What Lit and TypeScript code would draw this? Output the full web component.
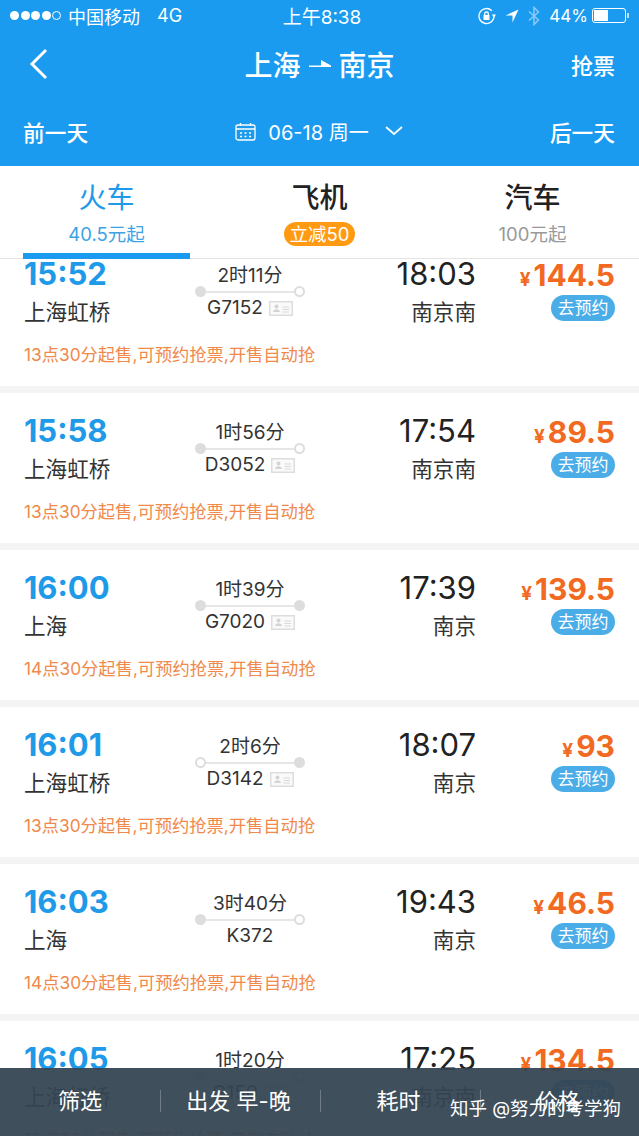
import { LitElement, html, css, svg } from "lit";
import { customElement } from "lit/decorators.js";

interface Train {
  dep: string;
  from: string;
  dur: string;
  no: string;
  arr: string;
  to: string;
  price: string;
  promo: string;
  id: boolean;
  startFull: boolean;
  endFull: boolean;
}

const sale13 = "13点30分起售,可预约抢票,开售自动抢";
const sale14 = "14点30分起售,可预约抢票,开售自动抢";

const trains: Train[] = [
  { dep: "15:52", from: "上海虹桥", dur: "2时11分", no: "G7152", arr: "18:03", to: "南京南", price: "144.5", promo: sale13, id: true, startFull: true, endFull: false },
  { dep: "15:58", from: "上海虹桥", dur: "1时56分", no: "D3052", arr: "17:54", to: "南京南", price: "89.5", promo: sale13, id: true, startFull: true, endFull: false },
  { dep: "16:00", from: "上海", dur: "1时39分", no: "G7020", arr: "17:39", to: "南京", price: "139.5", promo: sale14, id: true, startFull: true, endFull: true },
  { dep: "16:01", from: "上海虹桥", dur: "2时6分", no: "D3142", arr: "18:07", to: "南京", price: "93", promo: sale13, id: true, startFull: false, endFull: true },
  { dep: "16:03", from: "上海", dur: "3时40分", no: "K372", arr: "19:43", to: "南京", price: "46.5", promo: sale14, id: false, startFull: true, endFull: false },
  { dep: "16:05", from: "上海虹桥", dur: "1时20分", no: "G150", arr: "17:25", to: "南京南", price: "134.5", promo: sale13, id: true, startFull: true, endFull: false },
];

const idIcon = svg`<svg class="id" width="24" height="15" viewBox="0 0 24 15">
  <rect x=".75" y=".75" width="22.5" height="13.5" fill="#fafafa" stroke="#ddd" stroke-width="1.5"/>
  <circle cx="7.5" cy="5.5" r="2" fill="#d4d4d4"/>
  <path d="M4 11c.4-2 1.800-2.800 3.500-2.800s3.100.8 3.500 2.800z" fill="#d4d4d4"/>
  <path d="M13.500 6h6.500M13.500 8.500h6.500M13.500 11h6.500" stroke="#d8d8d8" stroke-width="1.200"/>
</svg>`;

@customElement("app-root")
export class AppRoot extends LitElement {
  static styles = css`
    :host {
      display: block;
      position: relative;
      width: 639px;
      height: 1136px;
      overflow: hidden;
      background: #f4f4f4;
      font-family: Inter, "Noto Sans CJK SC", sans-serif;
      color: #333;
    }
    .head {
      background: #1a9bef;
      color: #fff;
      height: 166px;
    }
    .status {
      height: 33px;
      box-sizing: border-box;
      padding: 0 10px 2px;
      display: flex;
      align-items: center;
      justify-content: space-between;
      font-size: 17px;
    }
    .status-side {
      display: flex;
      align-items: center;
      width: 220px;
    }
    .status-side.right {
      justify-content: flex-end;
      gap: 9px;
    }
    .clock {
      font-size: 19px;
      margin-left: 5px;
    }
    .dots {
      display: flex;
      gap: 1.5px;
      margin-right: 7px;
    }
    .dot {
      width: 9px;
      height: 9px;
      border-radius: 50%;
      background: #fff;
      box-sizing: border-box;
    }
    .dot.off {
      background: none;
      border: 1px solid #fff;
    }
    .carrier {
      font-size: 18px;
    }
    .net {
      margin-left: 17px;
    }
    .battery {
      display: flex;
      align-items: center;
      margin-left: -5px;
    }
    .battery-body {
      width: 34px;
      height: 15px;
      border: 1px solid #fff;
      border-radius: 3px;
      box-sizing: border-box;
      padding: 1px;
    }
    .battery-fill {
      width: 14px;
      height: 100%;
      background: #fff;
    }
    .battery-tip {
      width: 2px;
      height: 5px;
      background: #fff;
      opacity: 0.7;
      margin-left: 1px;
    }
    .nav {
      height: 61px;
      display: grid;
      grid-template-columns: 1fr auto 1fr;
      align-items: center;
      padding: 0 24px;
    }
    .back {
      margin-left: 4px;
    }
    .title {
      display: flex;
      align-items: center;
      gap: 8px;
      font-size: 28px;
      font-weight: 500;
    }
    .grab {
      justify-self: end;
      font-size: 22px;
      font-weight: 500;
    }
    .date-row {
      height: 72px;
      box-sizing: border-box;
      padding: 2px 24px 0 23px;
      display: grid;
      grid-template-columns: 1fr auto 1fr;
      align-items: center;
      font-size: 21.7px;
      font-weight: 500;
    }
    .date {
      display: flex;
      align-items: center;
      font-size: 20px;
      font-weight: 400;
    }
    .date span {
      margin: 0 16px 0 12px;
    }
    .next {
      justify-self: end;
    }

    .tabs {
      height: 93px;
      box-sizing: border-box;
      background: #fff;
      border-bottom: 1px solid #e4e4e4;
      display: grid;
      grid-template-columns: 167px 1fr 167px;
      padding: 0 23px;
      column-gap: 45px;
    }
    .tab {
      display: flex;
      flex-direction: column;
      align-items: center;
      padding-top: 14px;
      box-sizing: border-box;
      height: 93px;
    }
    .tab.on {
      border-bottom: 6px solid #1a9bef;
    }
    .tab-name {
      font-size: 28px;
      line-height: 36px;
      font-weight: 500;
      color: #222;
    }
    .tab.on .tab-name {
      color: #1f9ae8;
      font-weight: 400;
    }
    .tab-sub {
      margin-top: 6px;
      font-size: 18.5px;
      line-height: 24px;
      color: #999;
    }
    .tab.on .tab-sub {
      color: #3ea3e3;
    }
    .tab-sub.off {
      background: #ff9a12;
      color: #fff;
      border-radius: 12px;
      padding: 0 6px;
    }

    .list {
      height: 876px;
      overflow: hidden;
    }
    .cards {
      margin-top: -23px;
      display: flex;
      flex-direction: column;
      gap: 7px;
    }
    .card {
      height: 150px;
      box-sizing: border-box;
      background: #fff;
      padding: 17px 24px 0;
    }
    .row {
      display: flex;
      height: 90px;
    }
    .left {
      width: 171px;
    }
    .mid {
      width: 110px;
      display: flex;
      flex-direction: column;
      align-items: center;
      padding-top: 13px;
      font-size: 19px;
      color: #333;
    }
    .dur {
      line-height: 20px;
    }
    .arrive {
      width: 171px;
      text-align: right;
    }
    .price-col {
      flex: 1;
      display: flex;
      flex-direction: column;
      align-items: flex-end;
    }
    .time {
      font-size: 31px;
      line-height: 42px;
      color: #222;
    }
    .time.dep {
      color: #1f9ae8;
      font-weight: 700;
    }
    .place {
      margin-top: 2px;
      font-size: 21.6px;
      line-height: 30px;
      color: #333;
    }
    .line {
      width: 110px;
      height: 11px;
      display: flex;
      align-items: center;
    }
    .bar {
      flex: 1;
      height: 2px;
      background: #e6e6e6;
    }
    .end {
      width: 11px;
      height: 11px;
      box-sizing: border-box;
      border-radius: 50%;
      border: 2px solid #ddd;
      background: #fff;
    }
    .end.full {
      background: #ddd;
    }
    .no {
      margin-top: -1px;
      display: flex;
      align-items: center;
      gap: 6px;
      line-height: 24px;
    }
    .id {
      display: block;
    }
    .price {
      font-size: 30px;
      line-height: 44px;
      font-weight: 700;
      color: #f26a21;
    }
    .yen {
      font-size: 19px;
      line-height: 1;
      margin-right: 3px;
    }
    .book {
      margin-top: -2px;
      width: 64px;
      height: 26px;
      border-radius: 13px;
      background: #4aade8;
      color: #fff;
      font-size: 17px;
      line-height: 26px;
      text-align: center;
    }
    .promo {
      font-size: 17.3px;
      line-height: 24px;
      color: #ef8a4c;
    }

    .bottom {
      position: absolute;
      left: 0;
      right: 0;
      bottom: 0;
      height: 68px;
      background: rgba(52, 68, 82, 0.94);
      color: #fff;
      display: grid;
      grid-template-columns: 160px 160px 160px 159px;
      align-items: center;
      font-size: 22px;
    }
    .bottom div {
      height: 22px;
      line-height: 22px;
      text-align: center;
      border-left: 1px solid rgba(255, 255, 255, 0.25);
      margin-top: -3px;
    }
    .bottom div:first-child {
      border-left: none;
    }
    .bottom .shift {
      padding-right: 4px;
    }
    .mark {
      position: absolute;
      right: 18px;
      bottom: 16px;
      color: #fff;
      font-size: 18.5px;
      line-height: 24px;
    }
  `;

  card(t: Train) {
    return html`<div class="card">
      <div class="row">
        <div class="left">
          <div class="time dep">${t.dep}</div>
          <div class="place">${t.from}</div>
        </div>
        <div class="mid">
          <div class="dur">${t.dur}</div>
          <div class="line">
            <div class="end ${t.startFull ? "full" : ""}"></div>
            <div class="bar"></div>
            <div class="end ${t.endFull ? "full" : ""}"></div>
          </div>
          <div class="no">${t.no}${t.id ? idIcon : ""}</div>
        </div>
        <div class="arrive">
          <div class="time">${t.arr}</div>
          <div class="place">${t.to}</div>
        </div>
        <div class="price-col">
          <div class="price"><span class="yen">¥</span>${t.price}</div>
          <div class="book">去预约</div>
        </div>
      </div>
      <div class="promo">${t.promo}</div>
    </div>`;
  }

  render() {
    return html`
      <div class="head">
        <div class="status">
          <div class="status-side carrier">
            <div class="dots">
              <i class="dot"></i><i class="dot"></i><i class="dot"></i><i class="dot"></i><i class="dot off"></i>
            </div>
            中国移动<span class="net">4G</span>
          </div>
          <div class="clock">上午8:38</div>
          <div class="status-side right">
            <svg width="18" height="18" viewBox="0 0 18 18" fill="none" stroke="#fff" stroke-width="1.300">
              <path d="M16 9a7.500 7.500 0 1 1-2.200-5.300"/>
              <path d="M13.800 7.500 16 10.500 18 7.500" fill="#fff" stroke="none"/>
              <rect x="5.500" y="8" width="6" height="5" fill="#fff" stroke="none"/>
              <path d="M6.700 8V6.800a1.800 1.800 0 0 1 3.600 0V8"/>
            </svg>
            <svg width="14" height="14" viewBox="0 0 14 14"><path d="M13.500.500 7.500 13.500V6.500H.500z" fill="#fff"/></svg>
            <svg width="12" height="20" viewBox="0 0 12 20" fill="none" stroke="#8ccbf6" stroke-width="1.500"><path d="M1 5.500 10.500 14 6 18.500V1.500L10.500 6 1 14.500"/></svg>
            <span>44%</span>
            <div class="battery">
              <div class="battery-body"><div class="battery-fill"></div></div>
              <div class="battery-tip"></div>
            </div>
          </div>
        </div>
        <div class="nav">
          <svg class="back" width="22" height="32" viewBox="0 0 22 32" fill="none" stroke="#fff" stroke-width="3"><path d="M18 2 4 16l14 14"/></svg>
          <div class="title">
            <span>上海</span>
            <svg width="22" height="10" viewBox="0 0 22 10"><path d="M0 6.500h12V1l10 5.500v1.500H0z" fill="#fff"/></svg>
            <span>南京</span>
          </div>
          <div class="grab">抢票</div>
        </div>
        <div class="date-row">
          <div>前一天</div>
          <div class="date">
            <svg width="21" height="19" viewBox="0 0 21 19" fill="none" stroke="#fff" stroke-width="1.300">
              <rect x="1" y="3" width="19" height="15" rx="2"/>
              <path d="M5.500 1v3M15.500 1v3M1 7h19"/>
              <path d="M5 11h2M9.500 11h2M14 11h2M5 14.500h2M9.500 14.500h2M14 14.500h2"/>
            </svg>
            <span>06-18 周一</span>
            <svg width="18" height="10" viewBox="0 0 18 10" fill="none" stroke="#fff" stroke-width="1.800"><path d="M1 1l8 7 8-7"/></svg>
          </div>
          <div class="next">后一天</div>
        </div>
      </div>
      <div class="tabs">
        <div class="tab on"><div class="tab-name">火车</div><div class="tab-sub">40.5元起</div></div>
        <div class="tab"><div class="tab-name">飞机</div><div class="tab-sub off">立减50</div></div>
        <div class="tab"><div class="tab-name">汽车</div><div class="tab-sub">100元起</div></div>
      </div>
      <div class="list">
        <div class="cards">${trains.map((t) => this.card(t))}</div>
      </div>
      <div class="bottom">
        <div>筛选</div>
        <div class="shift">出发 早-晚</div>
        <div class="shift">耗时</div>
        <div class="shift">价格</div>
      </div>
      <div class="mark">知乎 @努力的考学狗</div>
    `;
  }
}
